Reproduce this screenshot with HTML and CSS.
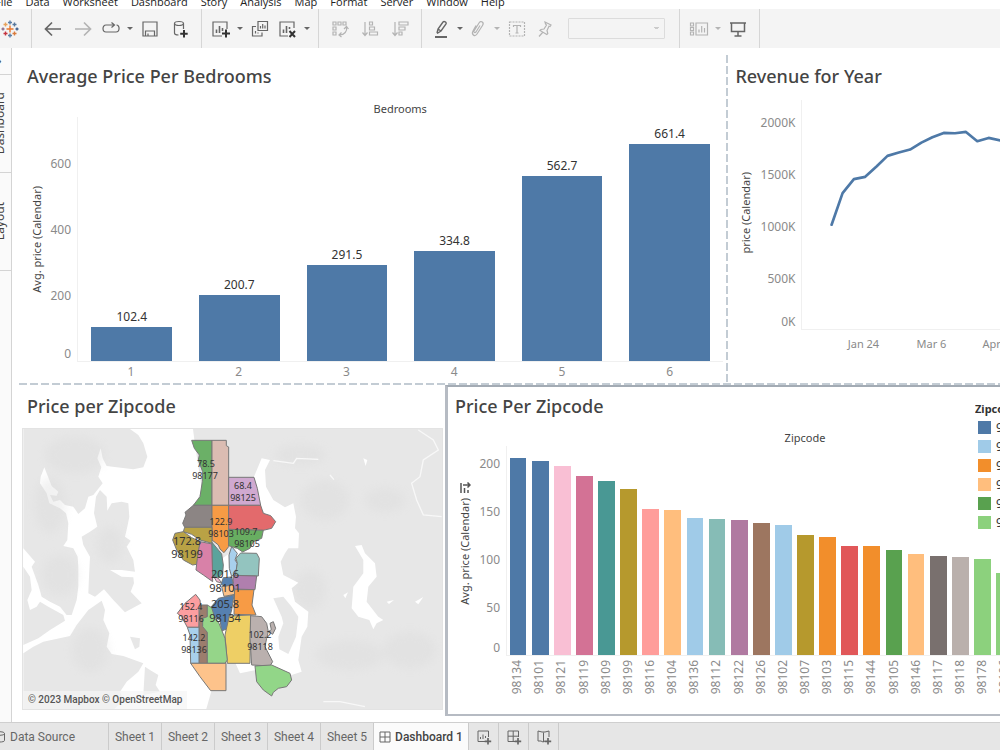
FILE: index.html
```html
<!DOCTYPE html>
<html lang="en">
<head>
<meta charset="utf-8">
<title>Dashboard 1</title>
<link rel="stylesheet" href="styles.css">
</head>
<body>
<nav class="menu">
  <button>File</button><button>Data</button><button>Worksheet</button><button>Dashboard</button><button>Story</button><button>Analysis</button><button>Map</button><button>Format</button><button>Server</button><button>Window</button><button>Help</button>
</nav>

<div class="toolbar">
  <div class="group group-logo">
    <svg width="18" height="18" viewBox="0 0 18 18" fill="none" stroke-width="1.4">
      <path d="M9 5.5v7M5.5 9h7" stroke="#e8762d"/>
      <path d="M9 0.5v4M7 2.5h4" stroke="#5b7fa6"/><path d="M9 13.5v4M7 15.5h4" stroke="#5b7fa6"/>
      <path d="M4.5 2.5v4M2.500 4.500h4" stroke="#e8a15a"/><path d="M13.500 2.500v4M11.500 4.500h4" stroke="#56779c"/>
      <path d="M4.500 11.500v4M2.500 13.500h4" stroke="#c5343f"/><path d="M13.500 11.500v4M11.500 13.500h4" stroke="#d97b3d"/>
      <path d="M2 7.500v3M.5 9h3" stroke="#8d6e8c"/><path d="M16 7.500v3M14.500 9h3" stroke="#3f5f8c"/>
    </svg>
  </div>
  <div class="group">
    <button class="tool" aria-label="Undo"><svg width="18" height="18" viewBox="0 0 18 18"><path d="M17 9H2M8 2.500L1.500 9L8 15.500" stroke-width="1.700"/></svg></button>
    <button class="tool off" aria-label="Redo"><svg width="18" height="18" viewBox="0 0 18 18"><path d="M1 9h15M10 2.500L16.500 9L10 15.500" stroke-width="1.700"/></svg></button>
    <button class="tool narrow" aria-label="Replay"><svg width="18" height="18" viewBox="0 0 18 18"><path d="M12 5H4C0 5 0 12 4 12h10c4 0 4-7 .5-7M9.500 2.500L12.500 5L9.500 7.500"/></svg></button>
    <button class="caret" aria-label="Replay options"></button>
    <button class="tool" aria-label="Save"><svg width="18" height="18" viewBox="0 0 18 18"><path d="M2 2h14v14H2zM4.500 16v-5h9v5M7 16v-2.500"/></svg></button>
    <button class="tool" aria-label="New data source"><svg width="18" height="18" viewBox="0 0 18 18"><ellipse cx="8" cy="3.500" rx="4.500" ry="2"/><path d="M3.500 3.500V13c0 1 1.500 2 4 2M12.500 3.500V9"/><path d="M13 10v7.500M9.200 13.700h7.500" stroke="#333" stroke-width="2"/></svg></button>
  </div>
  <div class="group">
    <button class="tool narrow" aria-label="New worksheet"><svg width="20" height="18" viewBox="0 0 20 18"><path d="M16 9V2H2v14h9"/><path d="M5.500 13V9.500M8.500 13V6M11.500 11V8" stroke-width="1.600"/><path d="M15 9.500v8M11 13.500h8" stroke="#333" stroke-width="2"/></svg></button>
    <button class="caret" aria-label="New worksheet options"></button>
    <button class="tool" aria-label="Duplicate"><svg width="18" height="18" viewBox="0 0 18 18"><path d="M7 1.500h9.500v9H7zM5 6.500H1.500V16H11v-3.500M4.500 13.500V11M7 13.500v-1M9.500 8.500V6M11.700 8.500V4M14 8.500V5.500"/></svg></button>
    <button class="tool narrow" aria-label="Clear sheet"><svg width="20" height="18" viewBox="0 0 20 18"><path d="M16 8V2H2v14h8"/><path d="M5.500 13V9.500M8.500 13V6M11.500 9V7" stroke-width="1.600"/><path d="M11.500 11l5.500 6M17 11l-5.500 6" stroke="#333" stroke-width="2"/></svg></button>
    <button class="caret" aria-label="Clear options"></button>
  </div>
  <div class="group">
    <button class="tool off" aria-label="Swap"><svg width="18" height="18" viewBox="0 0 18 18"><path d="M2 2h3v3H2zM7 2h3v3H7zM12 2h3v3h-3zM2 7h3v3H2zM2 12h3v3H2zM15.500 7c1 4-2 8-7 8M10.500 12.500L8 15l2.500 2M13 9l2.500-2.500L17.500 9"/></svg></button>
    <button class="tool off" aria-label="Sort ascending"><svg width="18" height="18" viewBox="0 0 18 18"><path d="M4 2v13M1.500 12.500L4 15.500l2.500-3M8.500 2h3v3h-3zM8.500 7h5v3h-5zM8.500 12h8v3h-8z"/></svg></button>
    <button class="tool off" aria-label="Sort descending"><svg width="18" height="18" viewBox="0 0 18 18"><path d="M4 2v13M1.500 12.500L4 15.500l2.500-3M8 2h9v3H8zM8 7h6v3H8zM8 12h3v3H8z"/></svg></button>
  </div>
  <div class="group">
    <button class="tool narrow" aria-label="Highlight"><svg width="18" height="18" viewBox="0 0 18 18"><path d="M5 13l1-4 5-7c1-1 4 0 3 2l-5 7-4 2.500M6 9l3 2" stroke-width="1.400"/><path d="M3 17h12" stroke-width="2"/></svg></button>
    <button class="caret" aria-label="Highlight options"></button>
    <button class="tool narrow off" aria-label="Group"><svg width="18" height="18" viewBox="0 0 18 18"><path d="M7 5.500L4 11c-2 4 2 6 4 3l5.500-8.500c2-3-1.500-5.500-3.500-2.500l-5 8c-.5 1.500 1 2 2 1l4-6.500"/></svg></button>
    <button class="caret off" aria-label="Group options"></button>
    <button class="tool off" aria-label="Show mark labels"><svg width="18" height="18" viewBox="0 0 18 18"><path d="M1.500 2h15v14h-15z" stroke-dasharray="2 1"/><path d="M5.500 7V5.500h7V7M9 5.500V13M7.500 13h3"/></svg></button>
    <button class="tool narrow off" aria-label="Fix axes"><svg width="18" height="18" viewBox="0 0 18 18"><path d="M9 2l6 3-1 1.500-1-.3-2 4.300.8 3-1 1L4 10.500l1-1 3-.5 2.500-4-1-1zM7 12l-4 4.500"/></svg></button>
    <select class="fit" aria-label="Fit" disabled><option></option></select>
  </div>
  <div class="group">
    <button class="tool narrow off" aria-label="Show cards"><svg width="20" height="18" viewBox="0 0 20 18"><path d="M1.500 3h3v3h-3zM1.500 7.500h3v3h-3zM1.500 12h3v3h-3zM7 3h11.500v12H7zM10 12.500V9.500M12.700 12.500V6M15.500 12.500V8"/></svg></button>
    <button class="caret off" aria-label="Card options"></button>
    <button class="tool" aria-label="Presentation mode"><svg width="18" height="18" viewBox="0 0 18 18"><path d="M1 3h16M2.500 3v8.500h13V3M9 11.500V16M5.500 16h7" stroke-width="1.500"/></svg></button>
  </div>
</div>

<div class="workspace">
  <aside class="side">
    <button class="side-toggle" aria-label="Expand">›</button>
    <button class="side-tab">Dashboard</button>
    <button class="side-tab">Layout</button>
  </aside>

  <main class="canvas">
    <div class="row row-top">
      <section class="panel panel-bedrooms">
        <h2>Average Price Per Bedrooms</h2>
        <div class="chart chart-bedrooms">
          <div class="head">Bedrooms</div>
          <div class="y-title">Avg. price (Calendar)</div>
          <div class="ticks"><span>600</span><span>400</span><span>200</span><span class="zero">0</span></div>
          <div class="plot">
            <div class="band"><span>102.4</span><i style="--v:102.4"></i></div>
            <div class="band"><span>200.7</span><i style="--v:200.7"></i></div>
            <div class="band"><span>291.5</span><i style="--v:291.5"></i></div>
            <div class="band"><span>334.8</span><i style="--v:334.8"></i></div>
            <div class="band"><span>562.7</span><i style="--v:562.7"></i></div>
            <div class="band"><span>661.4</span><i style="--v:661.4"></i></div>
          </div>
          <div class="x-labels"><span>1</span><span>2</span><span>3</span><span>4</span><span>5</span><span>6</span></div>
        </div>
      </section>

      <section class="panel panel-revenue">
        <h2>Revenue for Year</h2>
        <div class="chart chart-revenue">
          <div class="y-title">price (Calendar)</div>
          <div class="ticks"><span>2000K</span><span>1500K</span><span>1000K</span><span>500K</span><span class="zero">0K</span></div>
          <div class="plot">
            <svg viewBox="246 150 594 690" preserveAspectRatio="xMinYMin slice"><polyline points="335,525 368,430 402,388 436,381 470,350 503,318 537,308 571,299 605,278 638,262 672,249 706,250 739,246 773,274 807,264 850,273" fill="none" stroke="#4e79a7" stroke-width="8" stroke-linejoin="round" stroke-linecap="round"/></svg>
          </div>
          <div class="x-labels"><span>Jan 24</span><span>Mar 6</span><span>Apr 17</span></div>
        </div>
      </section>
    </div>

    <div class="row row-bottom">
      <section class="panel panel-map">
        <h2>Price per Zipcode</h2>
        <div class="map">
          <svg viewBox="23 429 419 281" preserveAspectRatio="xMinYMin slice">
            <defs><filter id="soft"><feGaussianBlur stdDeviation="5"/></filter></defs>
            <rect x="23" y="429" width="419" height="281" fill="#fff"/>
            <g fill="#e7e7e7">
              <g transform="translate(10 380) scale(.3333)">
                <path d="M40 147H360L385 165 400 190 412 230 400 262 370 268 320 262 290 258 278 235 272 205 262 235 274 262 265 290 278 310 250 345 235 350 225 385 205 402 190 380 165 375 150 360 130 365 120 345 140 347 145 335 125 318 112 285 103 262 92 290 90 310 110 340 118 370 150 385 168 400 175 430 172 480 160 498 190 505 203 530 205 560 205 620 200 660 185 705 170 705 150 680 120 665 95 650 85 615 65 560 75 545 40 505z"/>
                <path d="M40 560L60 590 65 630 52 660 60 690 80 680 90 665 115 680 160 705 165 722 120 750 85 775 40 795z"/>
                <path d="M40 820L70 800 100 785 180 768 200 735 235 690 275 662 285 690 280 720 298 760 290 800 305 822 340 828 400 850 385 875 350 905 330 935 340 960 310 990H40z"/>
                <path d="M270 330L290 350 292 392 305 370 335 365 355 370 358 410 352 440 345 470 362 482 350 500 370 540 375 575 335 570 300 570 335 590 370 592 372 610 362 635 395 670 345 697 310 660 282 628 255 650 235 640 237 590 240 530 220 495 215 470 240 455 262 440 252 400 258 350z"/>
                <path d="M360 770L390 775 388 800 375 808zM405 860L420 870 445 885 437 915 450 935 400 945z"/>
              </g>
              <path d="M193 429H442V710H206L210 696 220 660 215 640 214 600 222 575 200 545 190 525 192 510 202 490 195 445z"/>
            </g>
            <g fill="#d9d9d9" opacity=".35" filter="url(#soft)">
              <ellipse cx="75" cy="455" rx="30" ry="18"/><ellipse cx="50" cy="505" rx="15" ry="28"/><ellipse cx="60" cy="575" rx="18" ry="20"/><ellipse cx="90" cy="650" rx="18" ry="22"/><ellipse cx="110" cy="545" rx="13" ry="18"/><ellipse cx="385" cy="500" rx="20" ry="12"/><ellipse cx="325" cy="500" rx="24" ry="20"/><ellipse cx="350" cy="655" rx="34" ry="15"/><ellipse cx="410" cy="650" rx="26" ry="18"/><ellipse cx="300" cy="455" rx="26" ry="10"/><ellipse cx="310" cy="590" rx="16" ry="20"/>
            </g>
            <g transform="translate(230 420) scale(.3333)">
              <path fill="#fff" d="M95 115L120 120 105 150 108 200 130 240 165 262 190 250 198 290 195 325 207 340 205 385 175 385 165 400 152 425 160 465 205 488 185 505 195 545 235 575 232 620 215 650 205 720 215 755 185 765 130 740 30 760 -60 560 -30 420 70 350 120 300 90 260 72 170z"/>
              <path fill="#e7e7e7" d="M130 535L160 530 185 560 205 590 198 650 175 702 148 688 145 650 160 610 155 590z"/>
              <path fill="#fff" d="M375 378L395 375 405 400 435 430 440 470 415 500 410 545 445 590 460 600 440 610 430 628 418 600 385 590 365 565 370 500 400 460 400 420zM400 115l12 5-5 18zM470 545l22-5-15 12zM555 545l25-14-15 22zM340 525l14-8-8 18z"/>
              <path fill="none" stroke="#f8f8f8" stroke-width="4" d="M130 122L190 130 200 115 265 118M565 30L610 60 625 90 580 120 570 170 545 190 560 240 580 285 635 290M280 845L330 845 405 860M300 165l12 14"/>
            </g>
            <g stroke="#777" stroke-width="3" stroke-linejoin="round">
              <g transform="translate(150 425) scale(.3333)">
                <path fill="#6bb067" d="M125 46H186V241H130L150 215 157 170 158 140 145 105 148 90 133 70z"/>
                <path fill="#dbbcb2" d="M186 46H229V62L236 66V241H186z"/>
                <path fill="#d0a9d0" d="M236 157H312L322 190 332 241H236z"/>
                <path fill="#8c8584" d="M130 241H186V307H104L98 295 108 270 105 262z"/>
                <path fill="#f79b45" d="M186 241H236V365L222 383 210 372 205 360 186 345z"/>
                <path fill="#e36a6c" d="M236 241H332L340 265 362 272 377 290 365 310 340 316 236 313z"/>
                <path fill="#68ae61" d="M236 313L340 316 335 340 310 350 300 370 278 381 262 370 236 362z"/>
                <path fill="#b9a245" d="M104 307H186V355L150 345 125 328 100 320z"/>
                <path fill="#b9a245" d="M100 320L75 325 68 345 80 375 100 405 128 420 140 418 145 395 150 350 125 338z"/>
                <path fill="#d881a8" d="M150 350L186 357 188 470 160 450 138 435 142 400z"/>
                <path fill="#5ba39c" d="M186 352L215 387 220 420 218 445 205 460 188 455z"/>
                <path fill="#a8d0ec" d="M245 365L262 385 255 405 262 415 258 440 245 455 238 430 237 390z"/>
                <path fill="#93c4bf" d="M272 384L320 385 328 400 325 453 256 451 262 415 258 400z"/>
              </g>
              <g transform="translate(150 555) scale(.3333)">
                <path fill="#b07fae" d="M250 61L320 63 315 104 248 102z"/>
                <path fill="#f6bcd3" d="M190 62L205 70 215 84 200 80z"/>
                <path fill="#5680b0" d="M220 68L245 66 250 85 230 97 213 88z"/>
                <path fill="#fbc188" d="M215 95L250 90 255 118 222 124z"/>
                <path fill="#5680b0" d="M205 130L252 120 245 165 238 190 235 220 215 228 210 195 190 185 180 160z"/>
                <path fill="#f79b45" d="M254 104H312L306 150 318 180 252 178z"/>
                <path fill="#eecf65" d="M238 183L302 180 300 325H232L225 240z"/>
                <path fill="#bab0ae" d="M302 182L335 185 350 205 355 230 350 250 345 275 368 320 360 333 305 330 300 250zM360 205L370 200 377 220 368 238 355 230 364 224z"/>
                <path fill="#fc9ea0" d="M137 118L150 135 152 155 147 160V217H112L95 185 82 175 105 145z"/>
                <path fill="#9c7d6d" d="M150 150H172V325H147V217z"/>
                <path fill="#a8d0ec" d="M112 217H147V325H122L120 240z"/>
                <path fill="#95d589" d="M172 150L185 158 195 190 207 205 215 225 225 250 232 315 225 325H172V232L158 215 158 190 172 185z"/>
                <path fill="#fdc38b" d="M122 325H228V407H182L150 365z"/>
                <path fill="#92d688" d="M315 333L365 330 420 355 425 375 410 395 385 400 370 412 365 423 340 405 320 380z"/>
              </g>
            </g>
            <g class="map-text">
              <text x="206" y="467">78.5</text><text x="205" y="479">98177</text>
              <text x="243" y="489">68.4</text><text x="243" y="501">98125</text>
              <text x="221" y="525">122.9</text><text x="221" y="537">98103</text>
              <text x="246" y="535">109.7</text><text x="247" y="547">98105</text>
              <text x="191" y="610">152.4</text><text x="191" y="622">98116</text>
              <text x="194" y="641">142.2</text><text x="194" y="653">98136</text>
              <text x="260" y="638">102.2</text><text x="260" y="650">98118</text>
              <g class="map-text-large">
                <text x="187" y="545">172.8</text><text x="187" y="558">98199</text>
                <text x="225" y="578">201.6</text><text x="225" y="592">98101</text>
                <text x="225" y="608">205.8</text><text x="225" y="622">98134</text>
              </g>
            </g>
          </svg>
          <small class="credit">© 2023 Mapbox © OpenStreetMap</small>
        </div>
      </section>

      <section class="panel panel-zip">
        <h2>Price Per Zipcode</h2>
        <div class="chart chart-zip">
          <div class="head">Zipcode</div>
          <div class="y-title">Avg. price (Calendar)<svg class="sort" width="12" height="12" viewBox="0 0 12 12" fill="none" stroke="#555" stroke-width="1.500"><path d="M1 2h10M1 5.500h5M1 9h3M9 4v7M6.500 8.500L9 11l2.500-2.500"/></svg></div>
          <div class="ticks"><span>200</span><span>150</span><span>100</span><span>50</span><span class="zero">0</span></div>
          <div class="plot">
            <i style="--v:205.8;--c:#4e79a7"></i><i style="--v:202.4;--c:#4e79a7"></i><i style="--v:197.600;--c:#f9bfd4"></i><i style="--v:187;--c:#d37295"></i><i style="--v:182;--c:#499894"></i><i style="--v:172.8;--c:#b6992d"></i><i style="--v:152.4;--c:#ff9d9a"></i><i style="--v:151.500;--c:#ffbe7d"></i><i style="--v:143;--c:#a0cbe8"></i><i style="--v:142;--c:#86bcb6"></i><i style="--v:141;--c:#b07aa1"></i><i style="--v:138;--c:#9d7660"></i><i style="--v:136;--c:#a0cbe8"></i><i style="--v:125.400;--c:#b6992d"></i><i style="--v:122.9;--c:#f28e2b"></i><i style="--v:114;--c:#e15759"></i><i style="--v:113.800;--c:#f28e2b"></i><i style="--v:109.7;--c:#59a14f"></i><i style="--v:105.800;--c:#ffbe7d"></i><i style="--v:103.200;--c:#79706e"></i><i style="--v:102.2;--c:#bab0ac"></i><i style="--v:100.300;--c:#8cd17d"></i><i style="--v:85.700;--c:#8cd17d"></i>
          </div>
          <div class="x-labels"><span>98134</span><span>98101</span><span>98121</span><span>98119</span><span>98109</span><span>98199</span><span>98116</span><span>98104</span><span>98136</span><span>98112</span><span>98122</span><span>98126</span><span>98102</span><span>98107</span><span>98103</span><span>98115</span><span>98144</span><span>98105</span><span>98146</span><span>98117</span><span>98118</span><span>98178</span><span>98106</span></div>
        </div>
        <div class="legend">
          <h3>Zipcode</h3>
          <ul>
            <li style="--c:#4e79a7">98101</li><li style="--c:#a0cbe8">98102</li><li style="--c:#f28e2b">98103</li><li style="--c:#ffbe7d">98104</li><li style="--c:#59a14f">98105</li><li style="--c:#8cd17d">98106</li>
          </ul>
        </div>
      </section>
    </div>
  </main>
</div>

<footer class="tabs">
  <button class="tab tab-source"><svg width="12" height="12" viewBox="0 0 12 12"><ellipse cx="6" cy="2.500" rx="4.500" ry="1.800"/><path d="M1.500 2.500v7c0 2 9 2 9 0v-7"/></svg>Data Source</button>
  <button class="tab">Sheet 1</button><button class="tab">Sheet 2</button><button class="tab">Sheet 3</button><button class="tab">Sheet 4</button><button class="tab">Sheet 5</button>
  <button class="tab tab-active"><svg width="12" height="12" viewBox="0 0 12 12"><path d="M1 1h10v10H1zM6 1v10M1 6h10"/></svg>Dashboard 1</button>
  <button class="tab tab-icon" aria-label="New Worksheet"><svg width="16" height="16" viewBox="0 0 16 16"><path d="M12.500 8V2H2v10.500h7M4.500 10V8M7 10V5.500M9.500 9V7"/><path d="M12 9v6.500M8.700 12.300h6.500" stroke-width="1.700"/></svg></button>
  <button class="tab tab-icon" aria-label="New Dashboard"><svg width="16" height="16" viewBox="0 0 16 16"><path d="M12.500 8V2H2v10.500h7M7.200 2v10.500M2 7.200h10.500"/><path d="M12 9v6.500M8.700 12.300h6.500" stroke-width="1.700"/></svg></button>
  <button class="tab tab-icon" aria-label="New Story"><svg width="16" height="16" viewBox="0 0 16 16"><path d="M13 8V2L9 3H6L2 2v10h3l2 1 2-1M7.500 3.500V13"/><path d="M12 9v6.500M8.700 12.300h6.500" stroke-width="1.700"/></svg></button>
</footer>
</body>
</html>
```
FILE: styles.css
```css
* { box-sizing: border-box; }
body {
  margin: 0;
  height: 100vh;
  display: flex;
  flex-direction: column;
  overflow: hidden;
  background: #fff;
  color: #444;
  font: 12px/16px "Noto Sans", sans-serif;
}
button { border: 0; padding: 0; background: none; color: inherit; font: inherit; }
h2, h3, ul { margin: 0; padding: 0; }

/* Menu */
.menu {
  flex: none;
  height: 9px;
  margin-left: -5px;
  display: flex;
  align-items: flex-end;
  gap: 13px;
  overflow: hidden;
  color: #222;
  font: 11px/14px "Open Sans", sans-serif;
}

/* Toolbar */
.toolbar {
  flex: none;
  display: flex;
  height: 39px;
  background: #f4f4f4;
}
.group {
  display: flex;
  align-items: center;
  padding: 0 6px;
  border-right: 1px solid #d6d6d6;
}
.group-logo { width: 32px; padding: 0 1px; }
.tool { width: 30px; height: 30px; display: grid; place-items: center; }
.tool svg { fill: none; stroke: #666; stroke-width: 1.2; }
.narrow { width: 26px; }
.off { opacity: .45; }
.caret { width: 11px; height: 30px; display: grid; place-items: center; }
.caret::before {
  content: "";
  border: 3px solid transparent;
  border-top-color: #666;
  border-bottom: 0;
}
.fit {
  appearance: none;
  width: 97px;
  height: 21px;
  margin: 0 8px 0 10px;
  border: 1px solid #d3d3d3;
  border-radius: 1px;
  background: conic-gradient(from -45deg at 50% 100%, #bbb 90deg, transparent 0) right 5px center / 6px 3px no-repeat #f5f5f5;
}

/* Workspace */
.workspace { flex: 1; display: flex; min-height: 0; }
.side {
  flex: none;
  width: 24px;
  margin-left: -12px;
  display: flex;
  flex-direction: column;
  background: #fafafa;
  border-right: 1px solid #d4d4d4;
}
.side button { border-bottom: 1px solid #d4d4d4; }
.side-toggle { height: 27px; text-align: center; }
.side-tab {
  height: 98px;
  display: grid;
  place-items: center;
  writing-mode: sideways-lr;
}
.canvas { flex: 1; min-width: 0; overflow: hidden; }

.row { display: flex; }
.row-top {
  background: repeating-linear-gradient(90deg, #c3ccd4 0 8px, transparent 8px 11px) 7px 100% / 100% 2px no-repeat;
}
.panel { position: relative; min-width: 0; overflow: hidden; }
.panel h2 { color: #444; font-size: 18px; line-height: 24px; font-weight: 500; white-space: nowrap; }
.panel-bedrooms { flex: 716; padding: 16px 3px 3px 15px; }
.panel-revenue {
  flex: 272;
  padding: 16px 0 3px 9px;
  background: repeating-linear-gradient(#c3ccd4 0 8px, transparent 8px 11px) 0 7px / 2px 100% no-repeat;
}
.panel-map { flex: 421; padding: 9px 2px 5px 10px; }
.panel-map h2 { padding-left: 5px; }
.panel-zip {
  flex: 545;
  height: 331px;
  padding: 7px 0 0 7px;
  border: solid #b6bbc3;
  border-width: 2px 0 2px 3px;
  border-top-color: #a3abb4;
}

/* Charts */
.chart { display: grid; }
.head { grid-column: 3; text-align: center; font-size: 11px; }
.y-title {
  grid-column: 1;
  display: flex;
  align-items: center;
  justify-content: center;
  gap: 4px;
  writing-mode: sideways-lr;
  font-size: 11px;
  white-space: nowrap;
}
.ticks {
  display: flex;
  flex-direction: column;
  justify-content: flex-end;
  text-align: right;
  padding-right: 6px;
  color: #8a8a8a;
}
.plot { border-left: 1px solid #f0f0f0; border-bottom: 1px solid #f0f0f0; }
.x-labels { grid-column: 3; color: #8a8a8a; }

.chart-bedrooms { grid-template-columns: 19px 31px 1fr; grid-template-rows: 17px 245px 20px; padding-top: 12px; }
.chart-bedrooms .head { padding-top: 1px; }
.chart-bedrooms .ticks { gap: 50px; }
.chart-bedrooms .zero { margin-top: -8px; }
.chart-bedrooms .plot, .chart-bedrooms .x-labels { display: grid; grid-template-columns: repeat(6, 1fr); }
.chart-bedrooms .x-labels { text-align: center; padding-top: 2px; }
.band { display: flex; flex-direction: column; justify-content: flex-end; align-items: center; gap: 2px; min-height: 0; color: #333; }
.band i { width: 75%; height: calc(var(--v) / 744 * 100%); background: #4e79a7; }

.chart-revenue { grid-template-columns: 22px 44px 1fr; grid-template-rows: 230px 34px; padding-top: 12px; }
.chart-revenue .y-title { padding-bottom: 4px; }
.chart-revenue .ticks { gap: 36px; }
.chart-revenue .zero { margin-top: -9px; }
.chart-revenue .plot { min-width: 0; overflow: hidden; }
.chart-revenue .plot svg { display: block; width: 100%; height: 100%; }
.chart-revenue .x-labels { display: flex; padding: 6px 0 0 28px; font-size: 11px; overflow: hidden; }
.chart-revenue .x-labels span { flex: 0 0 68px; text-align: center; }

.chart-zip { width: calc(100% + 104px); grid-template-columns: 20px 31px 1fr; grid-template-rows: 16px 210px 44px; padding-top: 12px; }
.chart-zip .y-title { padding-bottom: 16px; }
.chart-zip .ticks { gap: 32px; }
.chart-zip .zero { margin-top: -8px; }
.chart-zip .plot, .chart-zip .x-labels { display: grid; grid-template-columns: repeat(27, 1fr); align-items: end; justify-items: center; }
.chart-zip .plot i { width: 76%; height: calc(var(--v) / 218 * 100%); background: var(--c); }
.chart-zip .x-labels { align-items: start; padding-top: 4px; }
.chart-zip .x-labels span { writing-mode: sideways-lr; }
.sort { flex: none; transform: rotate(-90deg); }

.legend { position: absolute; top: 13px; right: 0; width: 25px; overflow: hidden; color: #333; }
.legend h3 { font-size: 11px; line-height: 18px; }
.legend ul { list-style: none; padding-left: 3px; }
.legend li { height: 19px; display: flex; align-items: center; gap: 5px; }
.legend li::before { content: ""; flex: none; width: 13px; height: 13px; background: var(--c); }

/* Map */
.map { position: relative; margin-top: 10px; border: 1px solid #e3e3e3; }
.map > svg { display: block; width: 100%; height: 280px; }
.map-text { fill: #333; font-size: 9px; text-anchor: middle; }
.map-text-large { font-size: 11px; }
.credit {
  position: absolute;
  left: 0;
  bottom: 0;
  padding: 0 5px;
  background: rgba(245, 245, 245, .7);
  color: #555;
  font: 500 10px/18px Roboto, sans-serif;
}

/* Sheet tabs */
.tabs {
  flex: none;
  height: 28px;
  display: flex;
  background: #e6e6e6;
  border-top: 1px solid #cfcfcf;
  color: #666;
  font: 12px/16px Roboto, sans-serif;
}
.tab {
  width: 53px;
  display: flex;
  align-items: center;
  justify-content: center;
  gap: 4px;
  border-right: 1px solid #cbcbcb;
  white-space: nowrap;
}
.tab svg { flex: none; fill: none; stroke: #666; }
.tab-source { width: 115px; margin-left: -6px; justify-content: flex-start; }
.tab-active { width: 95px; background: #fbfbfb; color: #444; font-weight: 500; }
.tab-icon { width: 30px; }
```
